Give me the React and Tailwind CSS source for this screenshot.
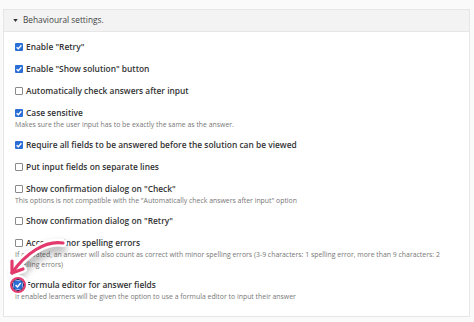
import React from 'react'

const items = [
  { label: 'Enable "Retry"', checked: true },
  { label: 'Enable "Show solution" button', checked: true },
  { label: 'Automatically check answers after input', checked: false },
  { label: 'Case sensitive', checked: true, desc: ['Makes sure the user input has to be exactly the same as the answer.'] },
  { label: 'Require all fields to be answered before the solution can be viewed', checked: true },
  { label: 'Put input fields on separate lines', checked: false },
  {
    label: 'Show confirmation dialog on "Check"',
    checked: false,
    desc: ['This options is not compatible with the "Automatically check answers after input" option'],
  },
  { label: 'Show confirmation dialog on "Retry"', checked: false },
  {
    label: 'Accept minor spelling errors',
    checked: false,
    desc: [
      'If activated, an answer will also count as correct with minor spelling errors (3-9 characters: 1 spelling error, more than 9 characters: 2',
      'spelling errors)',
    ],
  },
  {
    label: 'Formula editor for answer fields',
    checked: true,
    desc: ['If enabled learners will be given the option to use a formula editor to input their answer'],
  },
]

function Box({ checked }) {
  if (checked) {
    return (
      <span className="inline-flex h-[8px] w-[8px] shrink-0 items-center justify-center rounded-[1px] bg-[#2b6fd6]">
        <svg viewBox="0 0 8 8" className="h-[8px] w-[8px]">
          <path d="M1.6 4.2 L3.3 5.8 L6.4 2.3" fill="none" stroke="white" strokeWidth="1.3" />
        </svg>
      </span>
    )
  }
  return <span className="inline-block h-[8px] w-[8px] shrink-0 rounded-[1px] border border-[#8a8a8a] bg-white" />
}

// pink annotation arrow pointing at the formula editor checkbox
function Arrow() {
  const shaft = 'M63 17 C45 14 25 28 12 47'
  const head = 'M12 35 L12 47 L23 43'
  return (
    <svg className="pointer-events-none absolute left-0 top-[226px]" width="80" height="72" viewBox="0 0 80 72">
      <defs>
        <filter id="sh" x="-40%" y="-40%" width="180%" height="180%">
          <feGaussianBlur stdDeviation="3.5" />
        </filter>
      </defs>
      <path d={shaft} fill="none" stroke="#000" strokeOpacity="0.25" strokeWidth="11" filter="url(#sh)" transform="translate(3 5)" />
      <circle cx="18.5" cy="59" r="10" fill="white" />
      <path d={shaft} fill="none" stroke="white" strokeWidth="8" strokeLinecap="round" />
      <path d={head} fill="none" stroke="white" strokeWidth="8" strokeLinecap="round" strokeLinejoin="round" />
      <path d={shaft} fill="none" stroke="#e33a6e" strokeWidth="3.2" strokeLinecap="round" />
      <path d={head} fill="none" stroke="#e33a6e" strokeWidth="3.2" strokeLinecap="round" strokeLinejoin="round" />
      <rect x="13.5" y="54.5" width="9" height="9" rx="1.5" fill="#2b6fd6" />
      <path d="M15.6 59 L17.5 61 L20.6 57" fill="none" stroke="white" strokeWidth="1.4" />
      <circle cx="18" cy="59" r="5.6" fill="none" stroke="#24306a" strokeWidth="1" />
      <circle cx="18" cy="59" r="7" fill="none" stroke="#e33a6e" strokeWidth="2" />
    </svg>
  )
}

export default function App() {
  return (
    <div className="relative h-[322px] w-[474px] overflow-hidden bg-[#fafafa] pl-[3px] pr-[4px] pt-[9px] font-['Open_Sans',sans-serif] text-[#333]">
      <div className="border border-[#e6e6e6] bg-white">
        <div className="flex h-[22px] items-center gap-[5px] border-b border-[#e6e6e6] bg-[#f3f3f3] pl-[9px] text-[8.3px] text-[#444]">
          <svg viewBox="0 0 6 4" className="h-[3px] w-[5px]">
            <path d="M0 0 H6 L3 4 Z" fill="#333" />
          </svg>
          <span>Behavioural settings.</span>
        </div>
        <div className="flex flex-col gap-[8px] pb-[14px] pl-[11px] pr-[8px] pt-[8px]">
          {items.map((it) => (
            <div key={it.label}>
              <div className="flex h-[14px] items-center gap-[3px] text-[8.4px] font-semibold text-[#333]">
                <Box checked={it.checked} />
                <span className="whitespace-nowrap">{it.label}</span>
              </div>
              {it.desc &&
                it.desc.map((d) => (
                  <div key={d} className="whitespace-nowrap text-[6.9px] leading-[10px] text-[#777]">
                    {d}
                  </div>
                ))}
            </div>
          ))}
        </div>
      </div>
      <Arrow />
    </div>
  )
}
